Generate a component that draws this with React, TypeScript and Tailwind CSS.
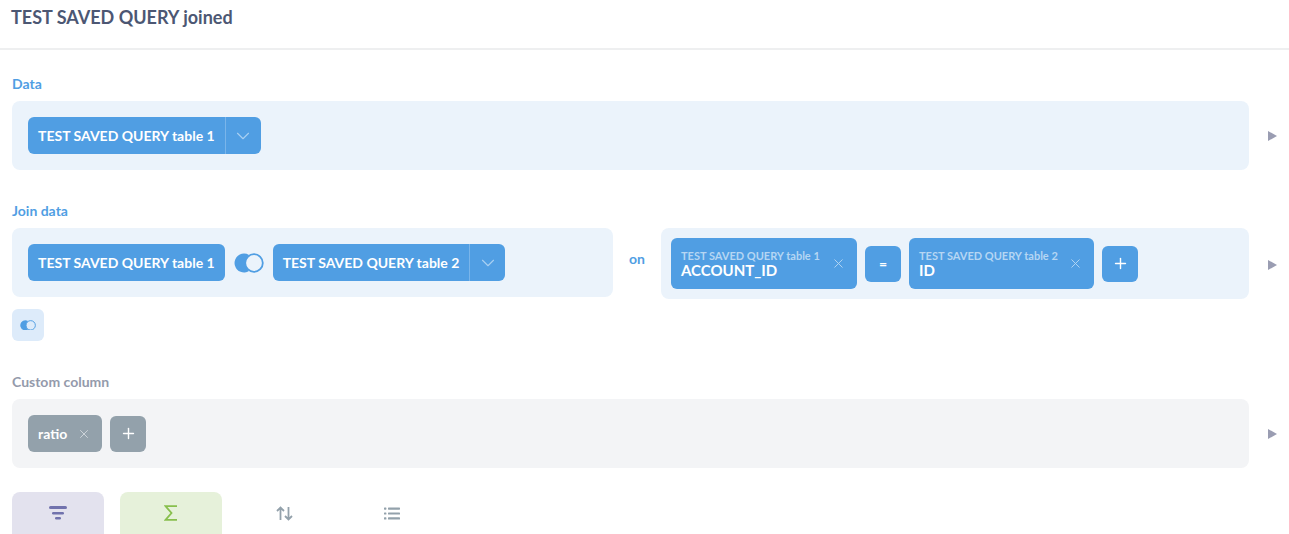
import React from 'react';
import { X, Plus, ChevronDown } from 'lucide-react';

const JoinIcon = ({ size }: { size: number }) => (
  <svg width={size} height={size * 2 / 3} viewBox="0 0 30 20" fill="none">
    <path d="M10 0.5a9.5 9.5 0 0 1 5 1.4 a11 11 0 0 0 0 16.2 a9.5 9.5 0 1 1 -5 -17.6z" fill="#509ee3" />
    <circle cx="20" cy="10" r="8.8" stroke="#509ee3" strokeWidth="1.8" />
  </svg>
);

const Chevron = () => (
  <span className="flex h-full w-[36px] items-center justify-center border-l border-[#7ab5ea]">
    <ChevronDown size={22} strokeWidth={1.2} className="text-[#a9d0f2]" />
  </span>
);

const Arrow = () => (
  <div className="ml-[19px] h-0 w-0 border-y-[5px] border-l-[9px] border-y-transparent border-l-[#9a9db2]" />
);

const TableChip = ({ name, dropdown }: { name: string; dropdown?: boolean }) => (
  <div className="flex h-[37px] items-center rounded-md bg-[#509ee3] text-[14px] font-bold text-white">
    <span className={dropdown ? 'pl-[10px] pr-[10px]' : 'px-[10px]'}>{name}</span>
    {dropdown && <Chevron />}
  </div>
);

const FieldChip = ({ table, field, width }: { table: string; field: string; width: string }) => (
  <div className={`flex h-[51px] items-center justify-between rounded-md bg-[#509ee3] pl-[10px] pr-[11px] ${width}`}>
    <div className="flex flex-col">
      <span className="text-[11px] leading-[13px] font-bold text-[#b5d6f3]">{table}</span>
      <span className="text-[15px] leading-[17px] font-bold text-white">{field}</span>
    </div>
    <X size={15} strokeWidth={1.5} className="text-[#b5d6f3]" />
  </div>
);

const SmallButton = ({ children, color = 'bg-[#509ee3]' }: { children: React.ReactNode; color?: string }) => (
  <div className={`flex h-[36px] w-[36px] items-center justify-center rounded-md text-white ${color}`}>{children}</div>
);

const Section = ({ label, color, children }: { label: string; color: string; children: React.ReactNode }) => (
  <div>
    <div className={`mb-[8px] h-[18px] text-[14px] leading-[18px] font-bold ${color}`}>{label}</div>
    {children}
  </div>
);

const ActionButton = ({ label, icon, className, textColor }: { label: string; icon: React.ReactNode; className: string; textColor: string }) => (
  <div className={`flex h-[76px] flex-col items-center rounded-lg pt-[11px] ${className}`}>
    <div className="flex h-[20px] items-center justify-center">{icon}</div>
    <span className={`mt-[13px] text-[14px] leading-[18px] font-bold ${textColor}`}>{label}</span>
  </div>
);

export default function App() {
  return (
    <div className="h-[534px] overflow-hidden bg-white font-['Lato',sans-serif]">
      <div className="h-[50px] border-b-2 border-[#eeeff0] pl-[11px] pt-[6px]">
        <h1 className="text-[18px] leading-[22px] font-bold text-[#4c5773]">TEST SAVED QUERY joined</h1>
      </div>

      <div className="pl-[12px] pt-[25px]">
        <Section label="Data" color="text-[#509ee3]">
          <div className="flex items-center">
            <div className="flex h-[69px] w-[1237px] items-center rounded-lg bg-[#ebf3fb] pl-[16px]">
              <TableChip name="TEST SAVED QUERY table 1" dropdown />
            </div>
            <Arrow />
          </div>
        </Section>

        <div className="mt-[32px]">
          <Section label="Join data" color="text-[#509ee3]">
            <div className="flex items-start">
              <div className="flex h-[69px] w-[601px] items-center rounded-lg bg-[#ebf3fb] pl-[16px]">
                <TableChip name="TEST SAVED QUERY table 1" />
                <span className="mx-[9px] flex"><JoinIcon size={30} /></span>
                <TableChip name="TEST SAVED QUERY table 2" dropdown />
              </div>
              <span className="mt-[22px] ml-[16px] w-[32px] text-[14px] leading-[18px] font-bold text-[#509ee3]">on</span>
              <div className="flex h-[71px] w-[588px] items-center gap-[8px] rounded-lg bg-[#ebf3fb] pl-[10px]">
                <FieldChip table="TEST SAVED QUERY table 1" field="ACCOUNT_ID" width="w-[186px]" />
                <SmallButton><span className="text-[14px] font-bold">=</span></SmallButton>
                <FieldChip table="TEST SAVED QUERY table 2" field="ID" width="w-[185px]" />
                <SmallButton><Plus size={17} strokeWidth={2} /></SmallButton>
              </div>
              <div className="mt-[32px]"><Arrow /></div>
            </div>
            <div className="mt-[10px] flex h-[32px] w-[32px] items-center justify-center rounded-md bg-[#ddebfa]">
              <JoinIcon size={16} />
            </div>
          </Section>
        </div>

        <div className="mt-[32px]">
          <Section label="Custom column" color="text-[#949aab]">
            <div className="flex items-center">
              <div className="flex h-[69px] w-[1237px] items-center gap-[8px] rounded-lg bg-[#f3f4f6] pl-[16px]">
                <div className="flex h-[37px] w-[74px] items-center justify-between rounded-md bg-[#93a1ab] pl-[10px] pr-[11px] text-[14px] font-bold text-white">
                  ratio
                  <X size={14} strokeWidth={1.5} className="text-[#d5dadf]" />
                </div>
                <SmallButton color="bg-[#93a1ab]"><Plus size={17} strokeWidth={2} /></SmallButton>
              </div>
              <Arrow />
            </div>
          </Section>
        </div>

        <div className="mt-[24px] flex gap-[16px]">
          <ActionButton
            label="Filter"
            className="w-[92px] bg-[#e3e2ee]"
            textColor="text-[#7172ad]"
            icon={
              <svg width="18" height="16" viewBox="0 0 18 16" fill="#7172ad">
                <rect x="0" y="1" width="18" height="3" rx="1.5" />
                <rect x="3" y="7" width="12" height="2.5" rx="1.2" />
                <rect x="6" y="12" width="6" height="2.5" rx="1.2" />
              </svg>
            }
          />
          <ActionButton
            label="Summarize"
            className="w-[102px] bg-[#e6f1da]"
            textColor="text-[#88bf4d]"
            icon={
              <svg width="14" height="16" viewBox="0 0 14 16" fill="none" stroke="#88bf4d" strokeWidth="1.8">
                <path d="M13 1.2H1.5L7.5 8L1.5 14.8H13" />
              </svg>
            }
          />
          <ActionButton
            label="Sort"
            className="w-[92px]"
            textColor="text-[#93a1ab]"
            icon={
              <svg width="17" height="15" viewBox="0 0 17 15" fill="none" stroke="#93a1ab" strokeWidth="1.8">
                <path d="M4.5 14V1.5M1 5l3.5-3.5L8 5M12.5 1v12.5M9 10l3.5 3.5L16 10" />
              </svg>
            }
          />
          <ActionButton
            label="Row limit"
            className="w-[92px]"
            textColor="text-[#93a1ab]"
            icon={
              <svg width="16" height="13" viewBox="0 0 16 13" fill="#93a1ab">
                <rect x="0" y="0.5" width="2.4" height="2.2" rx="0.6" />
                <rect x="4" y="0.5" width="12" height="2.2" rx="0.6" />
                <rect x="0" y="5.4" width="2.4" height="2.2" rx="0.6" />
                <rect x="4" y="5.4" width="12" height="2.2" rx="0.6" />
                <rect x="0" y="10.3" width="2.4" height="2.2" rx="0.6" />
                <rect x="4" y="10.3" width="12" height="2.2" rx="0.6" />
              </svg>
            }
          />
        </div>
      </div>
    </div>
  );
}
